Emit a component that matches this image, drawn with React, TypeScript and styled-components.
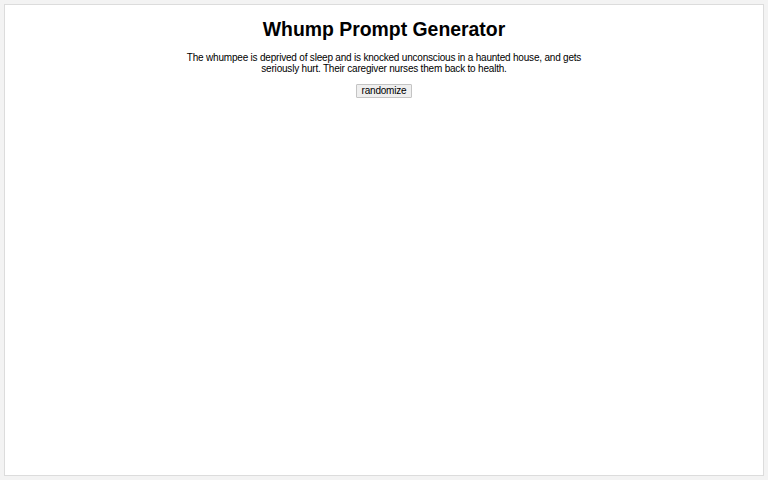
import React from "react";
import styled, { createGlobalStyle } from "styled-components";

const Global = createGlobalStyle`
  html, body {
    margin: 0;
    padding: 0;
    background: #f3f3f3;
    font-family: "Liberation Sans", Arial, sans-serif;
  }
  body {
    padding: 4px 4px;
    height: 480px;
    box-sizing: border-box;
  }
`;

const Panel = styled.main`
  box-sizing: border-box;
  height: 472px;
  background: #ffffff;
  border: 1px solid #dcdcdc;
  display: flex;
  flex-direction: column;
  align-items: center;
  padding-top: 13px;
`;

const Title = styled.h1`
  margin: 0;
  font-size: 19.4px;
  font-weight: bold;
  color: #000;
  line-height: 22px;
`;

const Prompt = styled.p`
  margin: 12px 0 0;
  max-width: 400px;
  text-align: center;
  font-size: 10px;
  letter-spacing: -0.2px;
  line-height: 11px;
  color: #000;
`;

const Button = styled.button`
  box-sizing: border-box;
  margin-top: 10px;
  height: 14px;
  font-family: "Liberation Sans", Arial, sans-serif;
  font-size: 10px;
  letter-spacing: -0.2px;
  line-height: 12px;
  padding: 0 5px;
  background: #efefef;
  border: 1px solid #c4c4c4;
  border-radius: 1px;
  color: #000;
`;

export default function App() {
  return (
    <>
      <Global />
      <Panel>
        <Title>Whump Prompt Generator</Title>
        <Prompt>
          The whumpee is deprived of sleep and is knocked unconscious in a haunted house, and gets
          seriously hurt. Their caregiver nurses them back to health.
        </Prompt>
        <Button>randomize</Button>
      </Panel>
    </>
  );
}
